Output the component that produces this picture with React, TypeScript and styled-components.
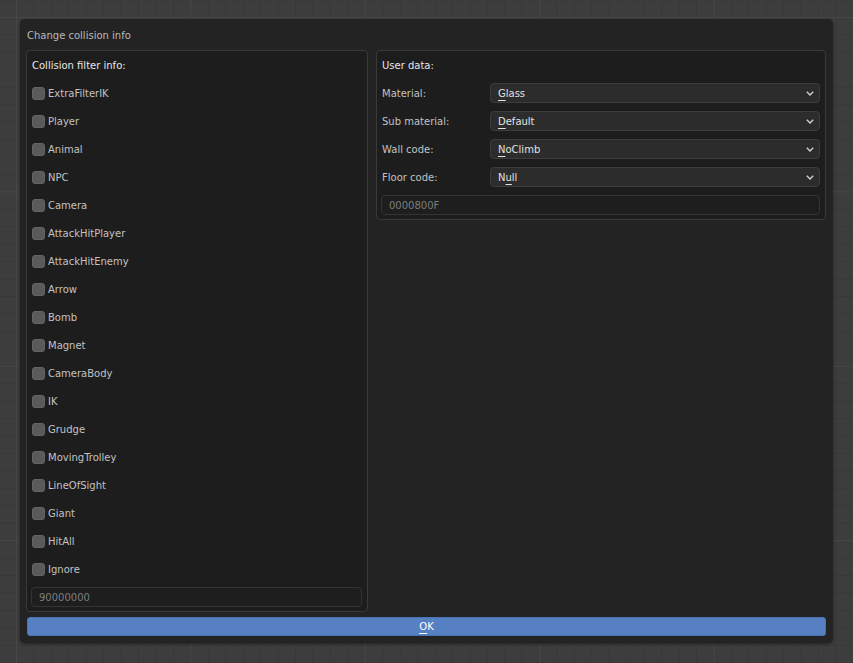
import React from 'react';
import styled, { createGlobalStyle } from 'styled-components';

const GlobalStyle = createGlobalStyle`
  html, body {
    margin: 0;
    padding: 0;
  }

  body {
    height: 663px;
    overflow: hidden;
    font-family: "DejaVu Sans", Inter, sans-serif;
    font-size: 10px;
    background-color: #3d3d3d;
    background-image:
      linear-gradient(to right, #474747 1px, transparent 1px),
      linear-gradient(to bottom, #474747 1px, transparent 1px),
      linear-gradient(to right, #383838 1px, transparent 1px),
      linear-gradient(to bottom, #383838 1px, transparent 1px);
    background-size: 174.4px 174.4px, 174.4px 174.4px, 17.44px 17.44px, 17.44px 17.44px;
    background-position: 16px 17px;
  }
`;

const Page = styled.div`
  padding: 19px 20px 0 20px;
`;

const Dialog = styled.div`
  width: 813px;
  height: 624px;
  box-sizing: border-box;
  background: #232323;
  border-radius: 5px;
  box-shadow: 0 1px 3px rgba(0, 0, 0, 0.45);
  padding: 0 6px 0 6px;
  display: flex;
  flex-direction: column;
`;

const Title = styled.div`
  height: 31px;
  display: flex;
  align-items: center;
  padding: 2px 0 0 1px;
  box-sizing: border-box;
  color: #b9b9b9;
`;

const Columns = styled.div`
  display: grid;
  grid-template-columns: 342px 450px;
  gap: 8px;
  align-items: start;
`;

const Panel = styled.div`
  background: #1d1d1d;
  border: 1px solid #3a3a3a;
  border-radius: 4px;
  padding: 0 5px 4px 5px;
`;

const Row = styled.div`
  height: 28px;
  display: flex;
  align-items: center;
  color: #c2c2c2;
`;

const Heading = styled(Row)`
  color: #e6e6e6;
`;

const Check = styled.span`
  width: 13px;
  height: 13px;
  box-sizing: border-box;
  border-radius: 3px;
  background: #5a5a5a;
  border: 1px solid #646464;
  margin-right: 3px;
`;

const TextField = styled.div<{ $indent: number }>`
  margin: 4px 0 0 ${(p) => p.$indent}px;
  height: 20px;
  box-sizing: border-box;
  border: 1px solid #333333;
  border-radius: 4px;
  background: #1e1e1e;
  color: #7d7d7d;
  display: flex;
  align-items: center;
  padding-left: 7px;
`;

const FieldLabel = styled.span`
  width: 108px;
  flex-shrink: 0;
`;

const Select = styled.div`
  flex: 1;
  height: 20px;
  box-sizing: border-box;
  background: #2c2c2c;
  border: 1px solid #3c3c3c;
  border-radius: 4px;
  color: #e2e2e2;
  display: flex;
  align-items: center;
  justify-content: space-between;
  padding: 0 5px 0 7px;
`;

const Key = styled.span`
  text-decoration: underline;
  text-decoration-thickness: 1px;
  text-underline-offset: 3px;
`;

const OkButton = styled.div`
  margin: 5px 1px 0 1px;
  height: 19px;
  box-sizing: border-box;
  background: #5680c2;
  border: 1px solid #4a73b4;
  border-radius: 3px;
  color: #ffffff;
  display: flex;
  align-items: center;
  justify-content: center;
`;

const Chevron = () => (
  <svg width="8" height="5" viewBox="0 0 8 5">
    <polyline points="0.8,0.8 4,4 7.2,0.8" fill="none" stroke="#d0d0d0" strokeWidth="1.4" />
  </svg>
);

const filters = [
  'ExtraFilterIK',
  'Player',
  'Animal',
  'NPC',
  'Camera',
  'AttackHitPlayer',
  'AttackHitEnemy',
  'Arrow',
  'Bomb',
  'Magnet',
  'CameraBody',
  'IK',
  'Grudge',
  'MovingTrolley',
  'LineOfSight',
  'Giant',
  'HitAll',
  'Ignore',
];

// value split around the mnemonic letter
const userFields = [
  { label: 'Material:', pre: '', key: 'G', post: 'lass' },
  { label: 'Sub material:', pre: '', key: 'D', post: 'efault' },
  { label: 'Wall code:', pre: '', key: 'N', post: 'oClimb' },
  { label: 'Floor code:', pre: 'N', key: 'u', post: 'll' },
];

const App: React.FC = () => {
  return (
    <>
      <GlobalStyle />
      <Page>
        <Dialog>
          <Title>Change collision info</Title>
          <Columns>
            <Panel>
              <Heading>Collision filter info:</Heading>
              {filters.map((name) => (
                <Row key={name}>
                  <Check />
                  {name}
                </Row>
              ))}
              <TextField $indent={-1}>90000000</TextField>
            </Panel>
            <Panel>
              <Heading>User data:</Heading>
              {userFields.map((f) => (
                <Row key={f.label}>
                  <FieldLabel>{f.label}</FieldLabel>
                  <Select>
                    <span>
                      {f.pre}
                      <Key>{f.key}</Key>
                      {f.post}
                    </span>
                    <Chevron />
                  </Select>
                </Row>
              ))}
              <TextField $indent={-1}>0000800F</TextField>
            </Panel>
          </Columns>
          <OkButton>
            <span>
              <Key>O</Key>K
            </span>
          </OkButton>
        </Dialog>
      </Page>
    </>
  );
};

export default App;
